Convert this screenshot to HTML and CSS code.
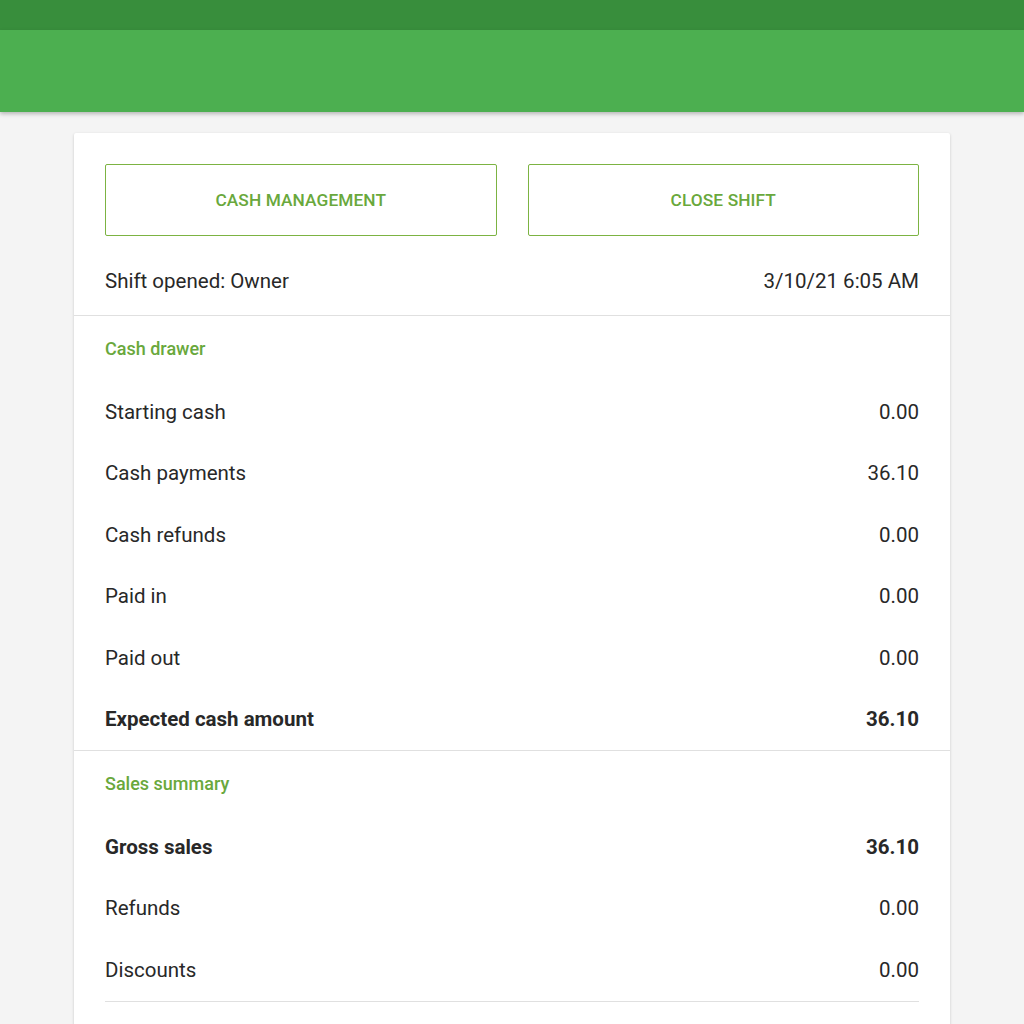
FILE: index.html
```html
<!DOCTYPE html>
<html lang="en">
  <head>
    <meta charset="UTF-8" />
    <meta name="viewport" content="width=device-width, initial-scale=1.0" />
    <title>Shift</title>
    <link rel="stylesheet" href="styles.css">
  </head>
  <body>
    <div class="status-bar"></div>
    <header class="toolbar"></header>
    <main class="content">
      <div class="card">
        <div class="actions">
          <button class="outline-btn">CASH MANAGEMENT</button>
          <button class="outline-btn">CLOSE SHIFT</button>
        </div>
        <div class="shift-info">
          <span>Shift opened: Owner</span>
          <span>3/10/21 6:05 AM</span>
        </div>

        <section class="section">
          <h2 class="section-title">Cash drawer</h2>
          <div class="row"><span>Starting cash</span><span>0.00</span></div>
          <div class="row"><span>Cash payments</span><span>36.10</span></div>
          <div class="row"><span>Cash refunds</span><span>0.00</span></div>
          <div class="row"><span>Paid in</span><span>0.00</span></div>
          <div class="row"><span>Paid out</span><span>0.00</span></div>
          <div class="row total"><span>Expected cash amount</span><span>36.10</span></div>
        </section>

        <section class="section">
          <h2 class="section-title">Sales summary</h2>
          <div class="row total"><span>Gross sales</span><span>36.10</span></div>
          <div class="row"><span>Refunds</span><span>0.00</span></div>
          <div class="row"><span>Discounts</span><span>0.00</span></div>
          <div class="inset-divider"></div>
          <div class="spacer"></div>
        </section>
      </div>
    </main>
  </body>
</html>
```

FILE: styles.css
```css
html,
body {
  height: 100%;
}

body {
  margin: 0;
  padding: 0;
  font-family: Roboto, "Noto Sans", Arial, sans-serif;
  background-color: #f4f4f4;
  color: #282828;
  overflow: hidden;
}

.status-bar {
  height: 30px;
  background-color: #388e3c;
}

.toolbar {
  height: 82px;
  background-color: #4caf50;
  box-shadow: 0 2px 4px rgba(0, 0, 0, 0.25);
  position: relative;
}

.content {
  padding-top: 21px;
}

.card {
  width: 876px;
  margin: 0 auto;
  background-color: #fff;
  border-radius: 2px;
  box-shadow: 0 1px 3px rgba(0, 0, 0, 0.18);
}

.actions {
  display: grid;
  grid-template-columns: 1fr 1fr;
  gap: 31px;
  padding: 31px 31px 0;
}

.outline-btn {
  height: 72px;
  background: #fff;
  border: 1px solid #7cb342;
  border-radius: 2px;
  color: #69a83c;
  font-family: inherit;
  font-size: 17.3px;
  font-weight: 500;
  letter-spacing: 0.1px;
  cursor: pointer;
}

.shift-info {
  display: flex;
  justify-content: space-between;
  padding: 34px 31px 23px;
  font-size: 20.5px;
  line-height: 22px;
  border-bottom: 1px solid #e0e0e0;
}

.section {
  border-bottom: 1px solid #e0e0e0;
}

.section:last-child {
  border-bottom: none;
}

.section-title {
  margin: 0;
  padding: 0 31px;
  height: 65px;
  line-height: 66px;
  font-size: 18px;
  font-weight: 500;
  color: #69a83c;
}

.row {
  display: flex;
  justify-content: space-between;
  align-items: center;
  height: 61.5px;
  padding: 0 31px;
  font-size: 20.5px;
}

.row.total {
  font-weight: 700;
}

.inset-divider {
  height: 1px;
  margin: 0 31px;
  background-color: #e0e0e0;
}

.spacer {
  height: 60px;
}
```
